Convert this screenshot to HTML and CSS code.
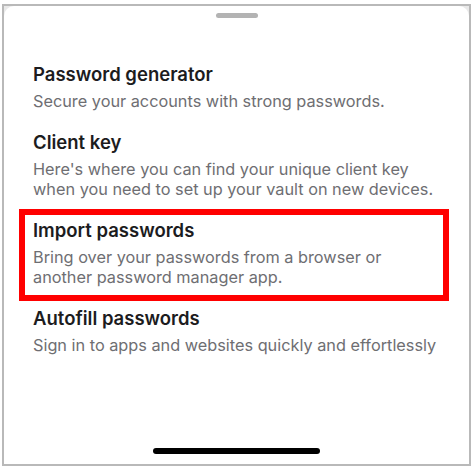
FILE: index.html
```html
<!DOCTYPE html>
<html>
	<head>
		<meta charset="UTF-8">
		<title>Settings sheet</title>
		<link rel="stylesheet" href="styles.css">
	</head>
	<body>
		<div class="screen">
			<div class="sheet">
				<div class="grabber"></div>
				<ul class="options">
					<li class="option">
						<h3>Password generator</h3>
						<p>Secure your accounts with strong passwords.</p>
					</li>
					<li class="option">
						<h3>Client key</h3>
						<p>Here's where you can find your unique client key when you need to set up your vault on new devices.</p>
					</li>
					<li class="option marked">
						<h3>Import passwords</h3>
						<p>Bring over your passwords from a browser or another password manager app.</p>
					</li>
					<li class="option">
						<h3>Autofill passwords</h3>
						<p>Sign in to apps and websites quickly and effortlessly</p>
					</li>
				</ul>
				<div class="home-bar"></div>
			</div>
		</div>
	</body>
</html>
```

FILE: styles.css
```css
html, body {
	height: 100%;
}

body {
	margin: 4px 3px 1px 2px;
	height: calc(100% - 5px);
	background: #ffffff;
	font-family: Inter, "Noto Sans", sans-serif;
}

.screen {
	box-sizing: border-box;
	height: 100%;
	border: 2px solid #b9b9b9;
	background: #e9e9e9;
	display: flex;
	flex-direction: column;
}

.sheet {
	flex: 1;
	display: flex;
	flex-direction: column;
	align-items: center;
	background: #ffffff;
	border-radius: 10px 10px 0 0;
	padding: 7px 0 10px;
}

.grabber {
	width: 42px;
	height: 5px;
	border-radius: 3px;
	background: #b3b3b3;
}

.options {
	align-self: stretch;
	list-style: none;
	margin: 44px 0 0;
	padding: 0 29px;
}

.option {
	position: relative;
	margin-bottom: 19px;
}

.option h3 {
	margin: 0;
	font-size: 18.5px;
	line-height: 24px;
	font-weight: 600;
	color: #1c1c1e;
}

.option p {
	margin: 5px 0 0;
	font-size: 16.3px;
	line-height: 20px;
	color: #6e6e72;
}

/* red frame drawn round the import row */
.option.marked::after {
	content: "";
	position: absolute;
	top: -9px;
	bottom: -14px;
	left: -14px;
	right: -9px;
	border: 6px solid #ff0000;
}

.home-bar {
	margin-top: auto;
	width: 167px;
	height: 6px;
	border-radius: 3px;
	background: #000000;
}
```
